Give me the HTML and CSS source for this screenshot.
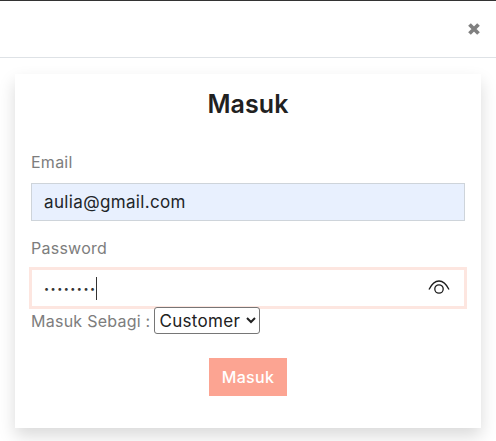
FILE: index.html
```html
<!DOCTYPE html>
<html lang="id">
<head>
<meta charset="utf-8">
<title>Masuk</title>
<link rel="stylesheet" href="styles.css">
</head>
<body>
<div class="modal">
  <header class="modal-header">
    <button class="close" type="button" aria-label="Tutup">
      <svg width="14" height="14" viewBox="0 0 14 14"><path d="M2.5 2.5 L11.5 11.5 M11.5 2.5 L2.5 11.5" stroke="#808080" stroke-width="3.8" fill="none"/></svg>
    </button>
  </header>
  <main class="modal-body">
    <form class="card">
      <h1 class="title">Masuk</h1>
      <label class="label label-email">Email</label>
      <div class="field field-email">aulia@gmail.com</div>
      <label class="label label-password">Password</label>
      <div class="field field-password">
        <span class="dots">••••••••</span><span class="caret"></span>
        <svg class="eye" width="22" height="16" viewBox="0 0 22 16"><path d="M1 9.5 C4 3.5 8 1 11 1 C14 1 18 3.5 21 9.5" stroke="#1c1c1c" stroke-width="1.3" fill="none"/><circle cx="11" cy="9" r="4.2" stroke="#1c1c1c" stroke-width="1.3" fill="none"/></svg>
      </div>
      <div class="role">
        <span class="role-label">Masuk Sebagi :</span>
        <select class="role-select"><option>Customer</option></select>
      </div>
      <div class="actions"><button class="submit" type="button">Masuk</button></div>
    </form>
  </main>
</div>
</body>
</html>
```
FILE: styles.css
```css
* { box-sizing: border-box; }
html, body { margin: 0; padding: 0; height: 100%; background: #fff; overflow: hidden; }
body { font-family: Inter, "Liberation Sans", sans-serif; }
.modal { border-top: 1px solid #333; }
.modal-header { height: 57px; border-bottom: 1px solid #dee2e6; display: flex; justify-content: flex-end; align-items: center; padding: 0 15px 0 0; }
.close { width: 14px; height: 14px; padding: 0; border: 0; background: none; display: flex; }
.modal-body { padding: 16px 15px 0; }
.card { height: 354px; background: #fff; box-shadow: 0 8px 16px rgba(0,0,0,.15); padding: 15px 16px 0; display: flex; flex-direction: column; }
.title { margin: 0; font-size: 25px; line-height: 30px; font-weight: 600; letter-spacing: .1px; color: #212121; text-align: center; }
.label { font-size: 16px; line-height: 24px; letter-spacing: .25px; color: #7d7d7d; }
.label-email { margin-top: 31px; }
.label-password { margin-top: 15px; }
.field { font-size: 16px; color: #212529; display: flex; align-items: center; }
.field-email { margin-top: 9px; height: 38px; background: #e8f0fe; border: 1px solid #ced4da; padding: 0 12px; font-size: 17px; letter-spacing: .35px; }
.field-password { margin: 7px -2px 0; height: 42px; background: #fff; border: 3px solid #fde6e0; padding: 0 12px; }
.dots { font-size: 9px; letter-spacing: 1.5px; width: 52px; overflow: hidden; white-space: nowrap; color: #333; }
.caret { width: 1px; height: 23px; background: #333; }
.eye { margin-left: auto; margin-right: 2px; }
.role { display: flex; align-items: center; margin-top: -2px; gap: 4px; height: 27px; }
.role-label { font-size: 16px; letter-spacing: .25px; color: #7d7d7d; }
.role-select { width: 106px; height: 27px; font-family: inherit; font-size: 17px; letter-spacing: .3px; color: #212121; background: #fff; border: 1px solid #767676; border-radius: 3px; padding: 0; }
.actions { display: flex; justify-content: center; margin-top: 24px; }
.submit { width: 78px; height: 38px; background: #fca492; color: #fff; border: 0; font-family: inherit; font-size: 16px; font-weight: 500; letter-spacing: .3px; padding: 0; }
```
